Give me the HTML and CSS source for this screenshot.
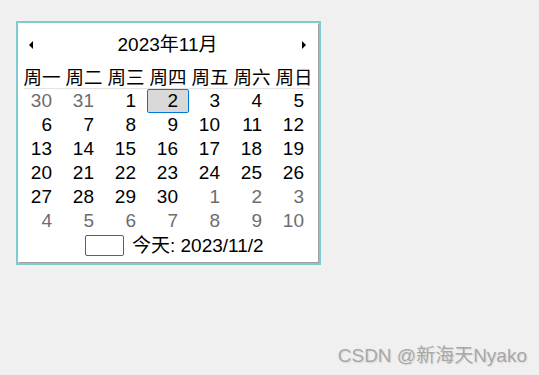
FILE: index.html
```html
<!DOCTYPE html>
<html lang="zh-CN">
<head>
  <meta charset="UTF-8">
  <title>MonthCalendar</title>
  <link rel="stylesheet" href="styles.css">
</head>
<body>
  <!-- Month calendar control -->
  <div class="calendar">
    <div class="inner">
      <div class="header">
        <span class="arrow left"></span>
        <span class="title">2023年11月</span>
        <span class="arrow right"></span>
      </div>

      <div class="grid names">
        <span>周一</span><span>周二</span><span>周三</span><span>周四</span><span>周五</span><span>周六</span><span>周日</span>
      </div>
      <div class="sep"></div>

      <div class="grid days">
        <span class="other">30</span><span class="other">31</span><span>1</span><span class="selected">2</span><span>3</span><span>4</span><span>5</span>
        <span>6</span><span>7</span><span>8</span><span>9</span><span>10</span><span>11</span><span>12</span>
        <span>13</span><span>14</span><span>15</span><span>16</span><span>17</span><span>18</span><span>19</span>
        <span>20</span><span>21</span><span>22</span><span>23</span><span>24</span><span>25</span><span>26</span>
        <span>27</span><span>28</span><span>29</span><span>30</span><span class="other">1</span><span class="other">2</span><span class="other">3</span>
        <span class="other">4</span><span class="other">5</span><span class="other">6</span><span class="other">7</span><span class="other">8</span><span class="other">9</span><span class="other">10</span>
      </div>

      <div class="today">
        <span class="today-box"></span>
        <span>今天: 2023/11/2</span>
      </div>
    </div>
  </div>

  <div class="watermark">CSDN @新海天Nyako</div>
</body>
</html>
```

FILE: styles.css
```css
body {
  margin: 0;
  background-color: #f0f0f0;
  font-family: "Liberation Sans", "Noto Sans CJK SC", sans-serif;
  width: 539px;
  height: 375px;
  position: relative;
  overflow: hidden;
}

.calendar {
  margin: 21px 0 0 16px;
  width: 305px;
  height: 244px;
  box-sizing: border-box;
  border: 2px solid #7ecbd1;
}

.inner {
  height: 100%;
  box-sizing: border-box;
  background-color: #fff;
  border: 1px solid #fff;
  border-right-color: #a0a0a0;
  border-bottom-color: #a0a0a0;
  padding: 0 3px 0 2px;
  font-size: 19px;
  color: #000;
}

.header {
  height: 40px;
  display: flex;
  align-items: center;
  justify-content: space-between;
  padding: 2px 9px 0 8px;
  box-sizing: border-box;
}

.title {
  line-height: 24px;
}

.arrow {
  width: 0;
  height: 0;
  border-top: 4px solid transparent;
  border-bottom: 4px solid transparent;
}

.arrow.left {
  border-right: 4px solid #000;
}

.arrow.right {
  border-left: 4px solid #000;
}

.grid {
  display: grid;
  grid-template-columns: repeat(7, 42px);
}

.names span {
  text-align: center;
  line-height: 24px;
  height: 24px;
  font-size: 18.5px;
  font-family: "Noto Sans CJK SC", sans-serif;
}

.sep {
  height: 1px;
  background-color: #e3e3e3;
  margin: 0 4px 0 3px;
}

.days span {
  text-align: right;
  padding-right: 11px;
  height: 24px;
  line-height: 24px;
  box-sizing: border-box;
}

.days .other {
  color: #6d6d6d;
}

.days .selected {
  background-color: #d9d9d9;
  border: 1px solid #0078d7;
  border-radius: 2px;
  padding-right: 10px;
  line-height: 22px;
}

.today {
  display: flex;
  align-items: center;
  gap: 8px;
  padding: 2px 0 0 64px;
  line-height: 21px;
}

.today-box {
  width: 39px;
  height: 21px;
  box-sizing: border-box;
  border: 1px solid #0078d7;
  border-radius: 2px;
}

.watermark {
  position: absolute;
  right: 12px;
  bottom: 8px;
  font-size: 19px;
  color: #a8a8a8;
  text-shadow: 1px 1px 1px #d8d8d8;
}
```
